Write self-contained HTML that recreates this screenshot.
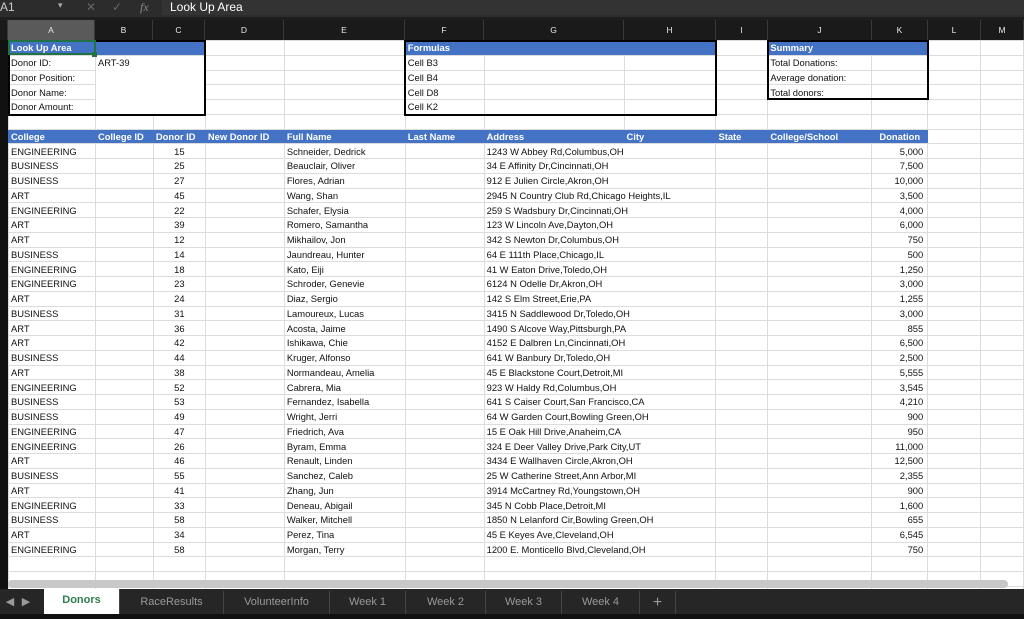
<!DOCTYPE html>
<html><head><meta charset="utf-8"><style>
*{margin:0;padding:0;box-sizing:border-box}
body{width:1024px;height:619px;overflow:hidden;background:#1e1e1e;font-family:"Liberation Sans",sans-serif;position:relative}
.fbar{position:absolute;left:0;top:0;width:1024px;height:17px;background:#2c2c2c;color:#fff;font-size:12px}
.fbar .in{position:absolute;left:162px;top:0;right:0;height:15px;background:#333;padding-left:8px;line-height:14px}
.hdr{position:absolute;top:20px;left:0;height:20px;width:1024px;background:#1a1a1a}
.hdr div{position:absolute;top:0;height:20px;line-height:20px;text-align:center;color:#e8e8e8;font-size:8.5px;border-right:1px solid #3a3a3a}
table{position:absolute;left:8px;top:40px;border-collapse:collapse;table-layout:fixed;background:#fff;font-size:9.4px;color:#111}
td{height:14.75px;border:1px solid #dcdcdc;padding:0 2px;white-space:nowrap;overflow:visible;line-height:13px}
tr.b td.h{background:#4472c4;color:#fff;font-weight:bold;border-left-color:#4472c4;border-right-color:#4472c4}
td.w{border-color:#fff}
.c{text-align:center}.r{text-align:right;padding-right:4px}
.rh{position:absolute;left:0;top:40px;width:8px;height:550px;background:#111}
.box{position:absolute;border:2px solid #000}
.sb{position:absolute;left:8px;top:580px;width:1000px;height:8px;background:#c8c8c8;border-radius:4px}
.tabs{position:absolute;left:0;top:589px;width:1024px;height:25px;background:#262626;font-size:11px;color:#999}
.tabs div{position:absolute;top:2px;height:23px;line-height:23px;text-align:center;border-right:1px solid #444}
.bot{position:absolute;left:0;top:614px;width:1024px;height:5px;background:#111}
</style></head><body>
<div class="fbar"><span style="position:absolute;left:0;top:0;color:#ccc">A1</span><span style="position:absolute;left:58px;top:0;color:#aaa;font-size:9px">▾</span><span style="position:absolute;left:86px;color:#666">✕</span><span style="position:absolute;left:112px;color:#666">✓</span><span style="position:absolute;left:140px;color:#888;font-style:italic;font-family:'Liberation Serif',serif">fx</span><div class="in">Look Up Area</div></div>
<div class="hdr">
<div style="left:0;width:8px"></div>
<div style="left:8px;width:87px;background:#5a5a5a">A</div>
<div style="left:95px;width:58px">B</div>
<div style="left:153px;width:52px">C</div>
<div style="left:205px;width:79px">D</div>
<div style="left:284px;width:121px">E</div>
<div style="left:405px;width:79px">F</div>
<div style="left:484px;width:140px">G</div>
<div style="left:624px;width:92px">H</div>
<div style="left:716px;width:52px">I</div>
<div style="left:768px;width:104px">J</div>
<div style="left:872px;width:56px">K</div>
<div style="left:928px;width:53px">L</div>
<div style="left:981px;width:43px">M</div>
</div>
<div class="rh"></div>
<table>
<colgroup><col style="width:87px"><col style="width:58px"><col style="width:52px"><col style="width:79px"><col style="width:121px"><col style="width:79px"><col style="width:140px"><col style="width:92px"><col style="width:52px"><col style="width:104px"><col style="width:56px"><col style="width:53px"><col style="width:43px"></colgroup>
<tr class="b"><td class="h">Look Up Area</td><td class="h"></td><td class="h"></td><td></td><td></td><td class="h">Formulas</td><td class="h"></td><td class="h"></td><td></td><td class="h">Summary</td><td class="h"></td><td></td><td></td></tr>
<tr><td>Donor ID:</td><td class="w">ART-39</td><td class="w"></td><td></td><td></td><td>Cell B3</td><td></td><td></td><td></td><td>Total Donations:</td><td></td><td></td><td></td></tr>
<tr><td>Donor Position:</td><td class="w"></td><td class="w"></td><td></td><td></td><td>Cell B4</td><td></td><td></td><td></td><td>Average donation:</td><td></td><td></td><td></td></tr>
<tr><td>Donor Name:</td><td class="w"></td><td class="w"></td><td></td><td></td><td>Cell D8</td><td></td><td></td><td></td><td>Total donors:</td><td></td><td></td><td></td></tr>
<tr><td>Donor Amount:</td><td class="w"></td><td class="w"></td><td></td><td></td><td>Cell K2</td><td></td><td></td><td></td><td></td><td></td><td></td><td></td></tr>
<tr><td></td><td></td><td></td><td></td><td></td><td></td><td></td><td></td><td></td><td></td><td></td><td></td><td></td></tr>
<tr class="b"><td class="h">College</td><td class="h">College ID</td><td class="h">Donor ID</td><td class="h">New Donor ID</td><td class="h">Full Name</td><td class="h">Last Name</td><td class="h">Address</td><td class="h">City</td><td class="h">State</td><td class="h">College/School</td><td class="h c">Donation</td><td></td><td></td></tr>
<tr><td>ENGINEERING</td><td></td><td class="c">15</td><td></td><td>Schneider, Dedrick</td><td></td><td colspan="2">1243 W Abbey Rd,Columbus,OH</td><td></td><td></td><td class="r">5,000</td><td></td><td></td></tr>
<tr><td>BUSINESS</td><td></td><td class="c">25</td><td></td><td>Beauclair, Oliver</td><td></td><td colspan="2">34 E Affinity Dr,Cincinnati,OH</td><td></td><td></td><td class="r">7,500</td><td></td><td></td></tr>
<tr><td>BUSINESS</td><td></td><td class="c">27</td><td></td><td>Flores, Adrian</td><td></td><td colspan="2">912 E Julien Circle,Akron,OH</td><td></td><td></td><td class="r">10,000</td><td></td><td></td></tr>
<tr><td>ART</td><td></td><td class="c">45</td><td></td><td>Wang, Shan</td><td></td><td colspan="2">2945 N Country Club Rd,Chicago Heights,IL</td><td></td><td></td><td class="r">3,500</td><td></td><td></td></tr>
<tr><td>ENGINEERING</td><td></td><td class="c">22</td><td></td><td>Schafer, Elysia</td><td></td><td colspan="2">259 S Wadsbury Dr,Cincinnati,OH</td><td></td><td></td><td class="r">4,000</td><td></td><td></td></tr>
<tr><td>ART</td><td></td><td class="c">39</td><td></td><td>Romero, Samantha</td><td></td><td colspan="2">123 W Lincoln Ave,Dayton,OH</td><td></td><td></td><td class="r">6,000</td><td></td><td></td></tr>
<tr><td>ART</td><td></td><td class="c">12</td><td></td><td>Mikhailov, Jon</td><td></td><td colspan="2">342 S Newton Dr,Columbus,OH</td><td></td><td></td><td class="r">750</td><td></td><td></td></tr>
<tr><td>BUSINESS</td><td></td><td class="c">14</td><td></td><td>Jaundreau, Hunter</td><td></td><td colspan="2">64 E 111th Place,Chicago,IL</td><td></td><td></td><td class="r">500</td><td></td><td></td></tr>
<tr><td>ENGINEERING</td><td></td><td class="c">18</td><td></td><td>Kato, Eiji</td><td></td><td colspan="2">41 W Eaton Drive,Toledo,OH</td><td></td><td></td><td class="r">1,250</td><td></td><td></td></tr>
<tr><td>ENGINEERING</td><td></td><td class="c">23</td><td></td><td>Schroder, Genevie</td><td></td><td colspan="2">6124 N Odelle Dr,Akron,OH</td><td></td><td></td><td class="r">3,000</td><td></td><td></td></tr>
<tr><td>ART</td><td></td><td class="c">24</td><td></td><td>Diaz, Sergio</td><td></td><td colspan="2">142 S Elm Street,Erie,PA</td><td></td><td></td><td class="r">1,255</td><td></td><td></td></tr>
<tr><td>BUSINESS</td><td></td><td class="c">31</td><td></td><td>Lamoureux, Lucas</td><td></td><td colspan="2">3415 N Saddlewood Dr,Toledo,OH</td><td></td><td></td><td class="r">3,000</td><td></td><td></td></tr>
<tr><td>ART</td><td></td><td class="c">36</td><td></td><td>Acosta, Jaime</td><td></td><td colspan="2">1490 S Alcove Way,Pittsburgh,PA</td><td></td><td></td><td class="r">855</td><td></td><td></td></tr>
<tr><td>ART</td><td></td><td class="c">42</td><td></td><td>Ishikawa, Chie</td><td></td><td colspan="2">4152 E Dalbren Ln,Cincinnati,OH</td><td></td><td></td><td class="r">6,500</td><td></td><td></td></tr>
<tr><td>BUSINESS</td><td></td><td class="c">44</td><td></td><td>Kruger, Alfonso</td><td></td><td colspan="2">641 W Banbury Dr,Toledo,OH</td><td></td><td></td><td class="r">2,500</td><td></td><td></td></tr>
<tr><td>ART</td><td></td><td class="c">38</td><td></td><td>Normandeau, Amelia</td><td></td><td colspan="2">45 E Blackstone Court,Detroit,MI</td><td></td><td></td><td class="r">5,555</td><td></td><td></td></tr>
<tr><td>ENGINEERING</td><td></td><td class="c">52</td><td></td><td>Cabrera, Mia</td><td></td><td colspan="2">923 W Haldy Rd,Columbus,OH</td><td></td><td></td><td class="r">3,545</td><td></td><td></td></tr>
<tr><td>BUSINESS</td><td></td><td class="c">53</td><td></td><td>Fernandez, Isabella</td><td></td><td colspan="2">641 S Caiser Court,San Francisco,CA</td><td></td><td></td><td class="r">4,210</td><td></td><td></td></tr>
<tr><td>BUSINESS</td><td></td><td class="c">49</td><td></td><td>Wright, Jerri</td><td></td><td colspan="2">64 W Garden Court,Bowling Green,OH</td><td></td><td></td><td class="r">900</td><td></td><td></td></tr>
<tr><td>ENGINEERING</td><td></td><td class="c">47</td><td></td><td>Friedrich, Ava</td><td></td><td colspan="2">15 E Oak Hill Drive,Anaheim,CA</td><td></td><td></td><td class="r">950</td><td></td><td></td></tr>
<tr><td>ENGINEERING</td><td></td><td class="c">26</td><td></td><td>Byram, Emma</td><td></td><td colspan="2">324 E Deer Valley Drive,Park City,UT</td><td></td><td></td><td class="r">11,000</td><td></td><td></td></tr>
<tr><td>ART</td><td></td><td class="c">46</td><td></td><td>Renault, Linden</td><td></td><td colspan="2">3434 E Wallhaven Circle,Akron,OH</td><td></td><td></td><td class="r">12,500</td><td></td><td></td></tr>
<tr><td>BUSINESS</td><td></td><td class="c">55</td><td></td><td>Sanchez, Caleb</td><td></td><td colspan="2">25 W Catherine Street,Ann Arbor,MI</td><td></td><td></td><td class="r">2,355</td><td></td><td></td></tr>
<tr><td>ART</td><td></td><td class="c">41</td><td></td><td>Zhang, Jun</td><td></td><td colspan="2">3914 McCartney Rd,Youngstown,OH</td><td></td><td></td><td class="r">900</td><td></td><td></td></tr>
<tr><td>ENGINEERING</td><td></td><td class="c">33</td><td></td><td>Deneau, Abigail</td><td></td><td colspan="2">345 N Cobb Place,Detroit,MI</td><td></td><td></td><td class="r">1,600</td><td></td><td></td></tr>
<tr><td>BUSINESS</td><td></td><td class="c">58</td><td></td><td>Walker, Mitchell</td><td></td><td colspan="2">1850 N Lelanford Cir,Bowling Green,OH</td><td></td><td></td><td class="r">655</td><td></td><td></td></tr>
<tr><td>ART</td><td></td><td class="c">34</td><td></td><td>Perez, Tina</td><td></td><td colspan="2">45 E Keyes Ave,Cleveland,OH</td><td></td><td></td><td class="r">6,545</td><td></td><td></td></tr>
<tr><td>ENGINEERING</td><td></td><td class="c">58</td><td></td><td>Morgan, Terry</td><td></td><td colspan="2">1200 E. Monticello Blvd,Cleveland,OH</td><td></td><td></td><td class="r">750</td><td></td><td></td></tr>
<tr><td></td><td></td><td></td><td></td><td></td><td></td><td colspan="2"></td><td></td><td></td><td></td><td></td><td></td></tr>
<tr><td></td><td></td><td></td><td></td><td></td><td></td><td colspan="2"></td><td></td><td></td><td></td><td></td><td></td></tr>
<tr><td></td><td></td><td></td><td></td><td></td><td></td><td colspan="2"></td><td></td><td></td><td></td><td></td><td></td></tr>
</table>
<div class="box" style="left:8px;top:40px;width:198px;height:76px"></div>
<div class="box" style="left:404px;top:40px;width:313px;height:76px"></div>
<div class="box" style="left:767px;top:40px;width:162px;height:60px"></div>
<div style="position:absolute;left:8px;top:40px;width:88px;height:15px;border:2px solid #217346"></div>
<div style="position:absolute;left:92px;top:52px;width:5px;height:5px;background:#217346"></div>
<div class="sb"></div>
<div class="tabs">
<div style="left:0;width:20px;border:none">◀</div><div style="left:18px;width:16px;border:none">▶</div>
<div style="left:44px;width:76px;background:#fff;color:#2e7d4f;font-weight:bold;top:0;height:25px">Donors</div>
<div style="left:120px;width:104px">RaceResults</div>
<div style="left:224px;width:106px">VolunteerInfo</div>
<div style="left:330px;width:76px">Week 1</div>
<div style="left:406px;width:80px">Week 2</div>
<div style="left:486px;width:76px">Week 3</div>
<div style="left:562px;width:78px">Week 4</div>
<div style="left:640px;width:36px;font-size:16px">+</div>
</div>
<div class="bot"></div>
</body></html>
